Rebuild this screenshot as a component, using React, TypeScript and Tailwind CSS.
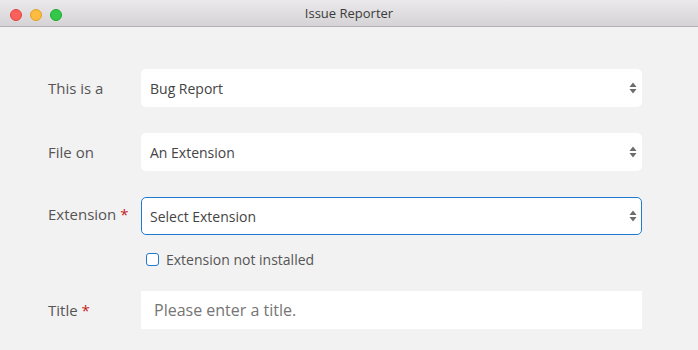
import React from "react";

function Arrows() {
  return (
    <svg width="8" height="12" viewBox="0 0 8 12" className="shrink-0">
      <path d="M4 0.5 L7.5 5 L0.5 5 Z" fill="#6b6b6b" />
      <path d="M4 11.5 L7.5 7 L0.5 7 Z" fill="#6b6b6b" />
    </svg>
  );
}

function SelectBox({ value, focused }: { value: string; focused?: boolean }) {
  return (
    <div
      className={
        focused
          ? "w-[501px] h-[38px] rounded-[5px] bg-white border border-[#1f7bd2] flex items-center justify-between pl-[8px] pr-[4px]"
          : "w-[501px] h-[38px] rounded-[5px] bg-white flex items-center justify-between pl-[9px] pr-[5px]"
      }
    >
      <span className="text-[14px] text-[#444]">{value}</span>
      <Arrows />
    </div>
  );
}

function Label({ text, required }: { text: string; required?: boolean }) {
  return (
    <div className="w-[93px] shrink-0 text-[15px] text-[#555]">
      {text}
      {required && <span className="text-[#c5201c] ml-[4px]">*</span>}
    </div>
  );
}

export default function App() {
  return (
    <div
      className="w-[698px] h-[350px] overflow-hidden bg-[#f2f2f2]"
      style={{ fontFamily: '"Open Sans", "Noto Sans", sans-serif' }}
    >
      {/* title bar */}
      <div className="relative h-[27px] bg-gradient-to-b from-[#ebe9eb] to-[#d5d3d5] border-b border-[#b3b1b3] flex items-center justify-center">
        <div className="absolute left-[10px] top-[9px] flex gap-[8px]">
          <span className="w-[12px] h-[12px] rounded-full bg-[#fc605c] border border-[#e0443e]" />
          <span className="w-[12px] h-[12px] rounded-full bg-[#fdbc40] border border-[#dea123]" />
          <span className="w-[12px] h-[12px] rounded-full bg-[#34c84a] border border-[#1aab29]" />
        </div>
        <span className="text-[13px] text-[#3b3b3b] mt-[2px]">Issue Reporter</span>
      </div>

      <div className="pl-[48px] pt-[42px] flex flex-col">
        <div className="flex items-center">
          <Label text="This is a" />
          <SelectBox value="Bug Report" />
        </div>
        <div className="flex items-center mt-[26px]">
          <Label text="File on" />
          <SelectBox value="An Extension" />
        </div>
        <div className="flex items-center mt-[26px]">
          <div className="-mt-[3px]">
            <Label text="Extension" required />
          </div>
          <SelectBox value="Select Extension" focused />
        </div>
        <div className="flex items-center ml-[98px] mt-[14px] gap-[7px] h-[21px]">
          <span className="w-[13px] h-[13px] rounded-[3px] border border-[#1f7bd2] bg-white" />
          <span className="text-[14px] text-[#555]">Extension not installed</span>
        </div>
        <div className="flex items-center mt-[21px]">
          <Label text="Title" required />
          <div className="w-[501px] h-[38px] bg-white flex items-center pl-[13px]">
            <span className="text-[16px] text-[#757575]">Please enter a title.</span>
          </div>
        </div>
      </div>
    </div>
  );
}
